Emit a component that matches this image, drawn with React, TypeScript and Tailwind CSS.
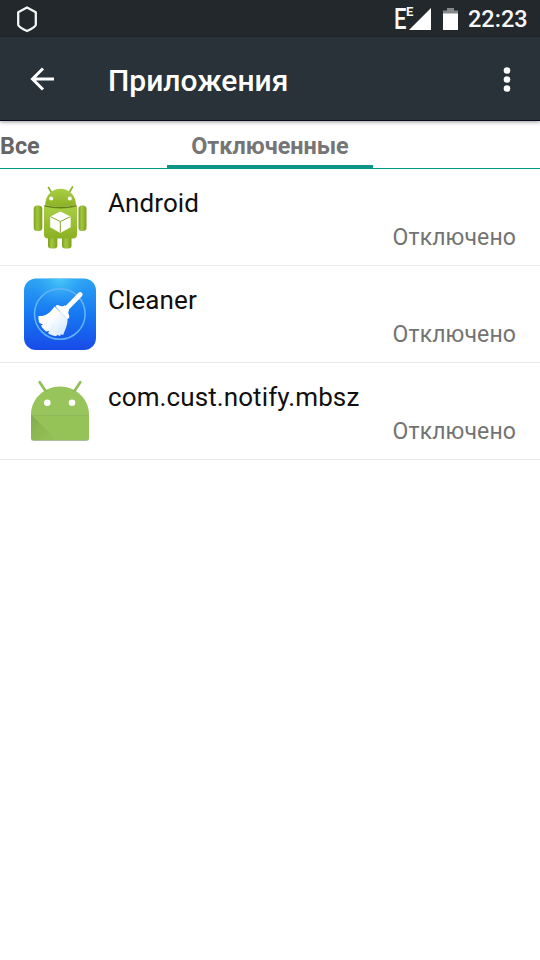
import type { ReactNode } from "react";

function PackageRobot() {
  return (
    <svg width="72" height="72" viewBox="24 181 72 72">
      <defs>
        <linearGradient id="robotBody" x1="0" x2="0" y1="0" y2="1">
          <stop offset="0" stopColor="#a9cf45" />
          <stop offset="1" stopColor="#8bb023" />
        </linearGradient>
        <linearGradient id="robotLimb" x1="0" x2="1" y1="0" y2="0">
          <stop offset="0" stopColor="#7c9e20" />
          <stop offset=".4" stopColor="#a2c83c" />
          <stop offset="1" stopColor="#7c9f1c" />
        </linearGradient>
      </defs>
      <path d="M48.500 187.500l3.500 6M72.500 187l-4 6.500" stroke="#8fb32d" strokeWidth="1.700" strokeLinecap="round" />
      <rect x="33.700" y="205.500" width="8.600" height="25.500" rx="3.500" fill="url(#robotLimb)" />
      <rect x="78.500" y="205.500" width="8" height="25.500" rx="3.500" fill="url(#robotLimb)" />
      <rect x="48" y="232" width="9.300" height="16.500" rx="3" fill="url(#robotLimb)" />
      <rect x="62" y="232" width="9.500" height="16.500" rx="3" fill="url(#robotLimb)" />
      <path d="M44 206q16 4 33 0v28.500q0 4-4 4H48q-4 0-4-4z" fill="url(#robotBody)" />
      <path d="M45.200 205c0-9 6.500-16.200 15.300-16.200s15.500 7.200 15.500 16.200q-15 4-30.800 0z" fill="url(#robotBody)" />
      <path d="M44.500 205.800q16 4 32 0" fill="none" stroke="#60830f" strokeWidth="1.400" />
      <circle cx="51.200" cy="198.600" r="2" fill="#fff" />
      <circle cx="69.800" cy="198.600" r="2" fill="#fff" />
      <path d="M60.300 211.500l10.400 5v10.800l-10.400 5.700-10.100-5.700v-10.800z" fill="#fff" />
      <path d="M50.500 216.700l9.800 4.800 10.200-4.800M60.300 221.500v11" fill="none" stroke="#86a72e" strokeWidth="1" />
    </svg>
  );
}

function CleanerIcon() {
  return (
    <svg width="72" height="72" viewBox="24 278 72 72">
      <defs>
        <linearGradient id="cleanerBack" x1="0" x2="0" y1="0" y2="1">
          <stop offset="0" stopColor="#2ca4f3" />
          <stop offset=".5" stopColor="#1678f2" />
          <stop offset="1" stopColor="#184ae9" />
        </linearGradient>
        <radialGradient id="cleanerGlow" cx=".5" cy="0" r=".4">
          <stop offset="0" stopColor="#55d5fa" stopOpacity=".75" />
          <stop offset="1" stopColor="#39a9f8" stopOpacity="0" />
        </radialGradient>
        <linearGradient id="bristles" x1="0" x2="1" y1="0" y2="1">
          <stop offset=".4" stopColor="#fff" />
          <stop offset="1" stopColor="#cbe4ff" />
        </linearGradient>
      </defs>
      <rect x="24" y="278.500" width="72" height="71.500" rx="12" fill="url(#cleanerBack)" />
      <rect x="24" y="278.500" width="72" height="71.500" rx="12" fill="url(#cleanerGlow)" />
      <circle cx="59.800" cy="314" r="25.300" fill="none" stroke="#63b5fa" strokeWidth="1.500" />
      <path d="M63 312L80.200 294.500" stroke="#fff" strokeWidth="4.800" strokeLinecap="round" />
      <path d="M55.500 306.500q1-2 3-1.300 3.500 2 6.500 0l4 4q-1.500 3.500.3 6.700.3 2.500-2.300 3z" fill="#fff" />
      <path d="M54.500 306.500l13 12.500c.5 6-3.500 13-4.300 16l-2.400-.8-.5 1.700-3-1-1.300 1.300c-3.500-.3-6-1.500-8-3.200l1.500-2-3.500.5c-3-2.500-4-4-5-6l2-1-3.500-1.500c-1-2-1.200-4-1-7 6 .8 12-3 16-9.500z" fill="url(#bristles)" />
      <path d="M61.500 325l-4 8M54.500 324.500l-4 6.500M48 321.500l-5 4" fill="none" stroke="#c9e2ff" strokeWidth=".5" />
      <path d="M56 308l10.500 10" stroke="#c2deff" strokeWidth=".6" />
    </svg>
  );
}

function NotifyRobot() {
  return (
    <svg width="72" height="72" viewBox="24 375 72 72">
      <defs>
        <linearGradient id="fold" x1="0" x2="1" y1="0" y2="1">
          <stop offset="0" stopColor="#84ad4e" />
          <stop offset="1" stopColor="#95c357" />
        </linearGradient>
      </defs>
      <path d="M31 415h58v23.500q0 2.500-3 2.500h-52q-3 0-3-2.500z" fill="#72945a" opacity=".6" />
      <path d="M31 414.500v23q0 2.500 3 2.500h52q3 0 3-2.500v-23z" fill="#95c357" />
      <path d="M32 415l24.500 25H34q-3 0-3-3v-22z" fill="url(#fold)" />
      <path d="M31 414.500c0-15.500 13-28 29-28s29 12.500 29 28z" fill="#97c45b" />
      <path d="M39.700 382.200l5.800 8.800M80.300 382.200l-5.800 8.800" stroke="#91bd58" strokeWidth="2.600" strokeLinecap="round" />
      <path d="M31.500 414.900h57" stroke="#82ad4c" strokeWidth=".8" />
      <circle cx="47.300" cy="402.700" r="3.300" fill="#fff" />
      <circle cx="72" cy="402.700" r="3.300" fill="#fff" />
    </svg>
  );
}

function AppRow({ icon, name }: { icon: ReactNode; name: string }) {
  return (
    <li className="flex h-[97px] border-b border-[#e8e8e8] px-6 pt-3">
      <div className="h-[72px] w-[72px] shrink-0">{icon}</div>
      <div className="ml-3 flex flex-1 flex-col">
        <span className="mt-1.5 h-8 text-[26px] leading-8 tracking-[0.1px] whitespace-nowrap text-[#101010]">{name}</span>
        <span className="mt-[5px] self-end text-[23px] leading-7 tracking-[0.1px] text-[#737373]">Отключено</span>
      </div>
    </li>
  );
}

export default function App() {
  return (
    <div className="flex h-screen flex-col overflow-hidden bg-white font-[Roboto,sans-serif]">
      <div className="flex h-[37px] shrink-0 items-center justify-between bg-[#22282b] pl-4 pr-3">
        <svg width="22" height="28" viewBox="0 0 22 28" fill="none">
          <path d="M11 2.500l8.800 4.700v12.600q0 2.200-8.800 6.200-8.800-4-8.800-6.200V7.200z" stroke="#f5f5f5" strokeWidth="2.300" strokeLinejoin="round" />
        </svg>
        <div className="flex h-full items-center text-[#f7f7f7]">
          <span className="flex h-[37px] w-[12px] items-center pt-px text-[29px] leading-[37px]"><span className="inline-block origin-left scale-x-[.76] font-medium">E</span></span>
          <span className="-mt-[13px] h-3 w-[7px] text-[13px] leading-3 font-bold">E</span>
          <svg width="22" height="22" viewBox="0 0 22 22" className="-ml-1"><path d="M0 22L22 0v22z" fill="#fff" /></svg>
          <svg width="15" height="23" viewBox="0 0 15 23" className="ml-3 translate-y-px">
            <path d="M4 0h7v2.500h4V6H0V2.500h4z" fill="#85898b" /><path d="M0 5.500h15V22H0z" fill="#fff" />
          </svg>
          <span className="ml-2.5 w-[60px] pt-px text-[23.500px] leading-[37px] font-medium whitespace-nowrap">22:23</span>
        </div>
      </div>
      <header className="z-10 flex h-[84px] shrink-0 items-center border-b border-[#090b20] bg-[#283238] pl-[30px] pr-[27px] shadow-[0_1px_4px_rgba(0,0,0,0.4)]">
        <svg width="25" height="24" viewBox="0 0 25 24" fill="none" stroke="#fff" strokeWidth="3">
          <path d="M13 1.500L2.500 12 13 22.500M2.500 12H24" />
        </svg>
        <h1 className="ml-[53px] flex-1 pt-1 text-[30px] leading-9 font-medium text-white">Приложения</h1>
        <svg width="12" height="26" viewBox="0 0 12 26" fill="#fff">
          <circle cx="6" cy="4.500" r="3.300" /><circle cx="6" cy="13.500" r="3.300" /><circle cx="6" cy="22.500" r="3.300" />
        </svg>
      </header>
      <nav className="flex h-12 shrink-0 border-b border-[#009688] text-[23.400px] font-bold">
        <button className="w-[167px] text-left leading-[50px] text-[#666]">Все</button>
        <button className="h-[47px] w-[206px] border-b-[3px] border-[#109488] text-center leading-[50px] text-[#757575]">Отключенные</button>
      </nav>
      <ul>
        <AppRow name="Android" icon={<PackageRobot />} />
        <AppRow name="Cleaner" icon={<CleanerIcon />} />
        <AppRow name="com.cust.notify.mbsz" icon={<NotifyRobot />} />
      </ul>
    </div>
  );
}
